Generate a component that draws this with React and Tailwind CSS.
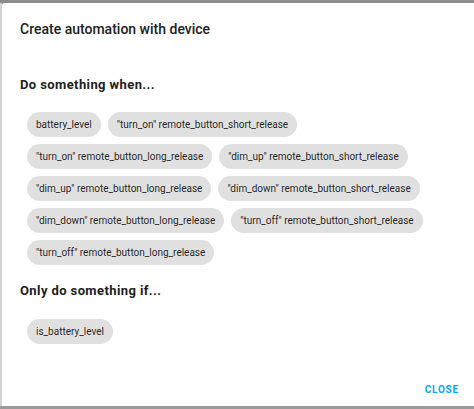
export default function App() {
  const triggers = [
    "battery_level",
    '"turn_on" remote_button_short_release',
    '"turn_on" remote_button_long_release',
    '"dim_up" remote_button_short_release',
    '"dim_up" remote_button_long_release',
    '"dim_down" remote_button_short_release',
    '"dim_down" remote_button_long_release',
    '"turn_off" remote_button_short_release',
    '"turn_off" remote_button_long_release',
  ];
  const conditions = ["is_battery_level"];
  const Chip = ({ label }) => (
    <div className="h-[25px] px-[9px] rounded-full bg-[#e0e0e0] text-[rgba(0,0,0,0.87)] text-[10px] flex items-center whitespace-nowrap">
      {label}
    </div>
  );
  return (
    <div
      className="w-[474px] h-[409px] overflow-hidden flex flex-col bg-[#9a9a9a]"
      style={{ fontFamily: "Roboto, 'Noto Sans', sans-serif" }}
    >
      <div className="h-[3px] bg-[#8c8c8c] shrink-0" />
      <div className="flex flex-1">
        <div className="w-[2px] bg-[#d4d4d4]" />
        <div className="flex-1 bg-white rounded-tl-[3px] flex flex-col">
          <div className="pl-[18px] pt-[16px] text-[14px] font-medium text-[#212121] leading-[20px]">
            Create automation with device
          </div>
          <div className="pl-[18px] pt-[36px] text-[13px] font-bold text-[#212121] leading-[20px] tracking-[0.4px]">
            Do something when...
          </div>
          <div className="flex flex-wrap gap-[7px] pl-[25px] pr-[20px] pt-[17px]">
            {triggers.map((t) => (
              <Chip key={t} label={t} />
            ))}
          </div>
          <div className="pl-[18px] pt-[16px] text-[13px] font-bold text-[#212121] leading-[20px] tracking-[0.4px]">
            Only do something if...
          </div>
          <div className="flex flex-wrap gap-[7px] pl-[25px] pr-[20px] pt-[18px]">
            {conditions.map((t) => (
              <Chip key={t} label={t} />
            ))}
          </div>
          <div className="flex-1" />
          <div className="flex justify-end pr-[15px] pb-[9px]">
            <div className="text-[10px] font-bold tracking-[0.8px] text-[#03a9f4]">CLOSE</div>
          </div>
        </div>
      </div>
      <div className="h-[3px] bg-[#9a9a9a] shrink-0" />
    </div>
  );
}
